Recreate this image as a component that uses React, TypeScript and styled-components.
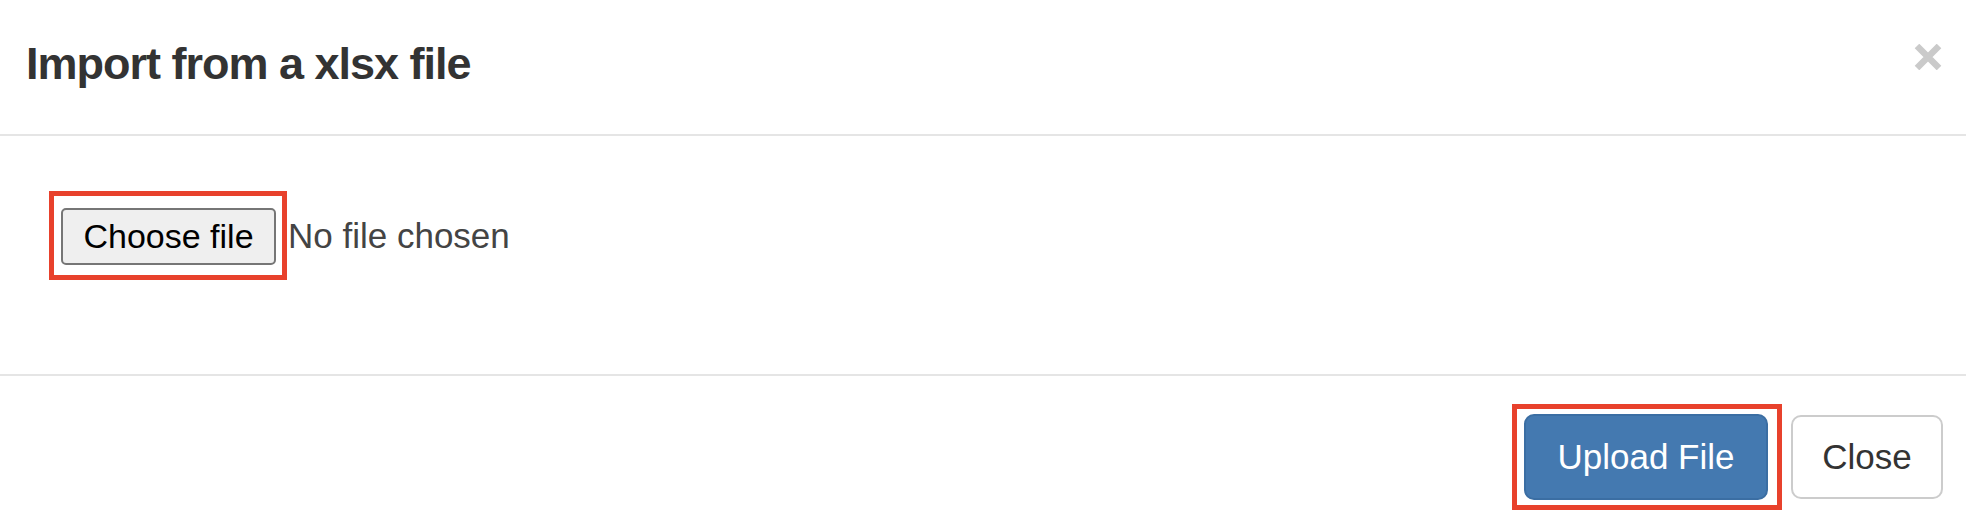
import React from "react";
import styled, { createGlobalStyle } from "styled-components";

const GlobalStyle = createGlobalStyle`
  html, body {
    margin: 0;
    padding: 0;
    background: #ffffff;
  }
  body {
    font-family: "Liberation Sans", Arial, Helvetica, sans-serif;
    color: #333333;
  }
  * { box-sizing: border-box; }
`;

const Modal = styled.div`
  width: 1966px;
  height: 518px;
  background: #ffffff;
  display: flex;
  flex-direction: column;
  overflow: hidden;
`;

const Header = styled.div`
  height: 136px;
  padding: 38px 24px 0 26px;
  border-bottom: 2px solid #e5e5e5;
  display: flex;
  justify-content: space-between;
  align-items: flex-start;
`;

const Title = styled.h4`
  margin: 0;
  font-family: "Liberation Sans", Arial, Helvetica, sans-serif;
  font-size: 45px;
  line-height: 52px;
  font-weight: 700;
  letter-spacing: -1px;
  color: #333333;
`;

const CloseX = styled.button`
  margin-top: 6px;
  padding: 0;
  border: 0;
  background: transparent;
  width: 28px;
  height: 26px;
  display: flex;
  cursor: pointer;
`;

const Body = styled.div`
  height: 238px;
  padding: 55px 0 0 49px;
`;

const FileRow = styled.div`
  display: flex;
  align-items: center;
`;

const Highlight = styled.div<{ $pad: string }>`
  border: 5px solid #e8412c;
  padding: ${(p) => p.$pad};
  display: flex;
  align-items: center;
`;

const ChooseButton = styled.button`
  width: 215px;
  height: 57px;
  border: 2px solid #767676;
  border-radius: 5px;
  background: #efefef;
  color: #000000;
  font-family: "Liberation Sans", Arial, Helvetica, sans-serif;
  font-size: 34px;
  padding: 0;
  display: flex;
  align-items: center;
  justify-content: center;
`;

const FileText = styled.span`
  margin-left: 1px;
  font-size: 35px;
  color: #444444;
  font-family: "Liberation Sans", Arial, Helvetica, sans-serif;
`;

const Footer = styled.div`
  flex: 1;
  border-top: 2px solid #e5e5e5;
  padding: 28px 23px 0 0;
  display: flex;
  justify-content: flex-end;
  align-items: flex-start;
`;

const FooterButtons = styled.div`
  display: flex;
  align-items: center;
`;

const Btn = styled.button<{ $primary?: boolean; $w: number; $h: number }>`
  width: ${(p) => p.$w}px;
  height: ${(p) => p.$h}px;
  border-radius: 10px;
  border: 2px solid ${(p) => (p.$primary ? "#3b6ea3" : "#cccccc")};
  background: ${(p) => (p.$primary ? "#4479b0" : "#ffffff")};
  color: ${(p) => (p.$primary ? "#ffffff" : "#333333")};
  font-family: "Liberation Sans", Arial, Helvetica, sans-serif;
  font-size: 35px;
  padding: 0;
  display: flex;
  align-items: center;
  justify-content: center;
  cursor: pointer;
`;

const CloseWrap = styled.div`
  margin-left: 9px;
`;

export default function App() {
  return (
    <>
      <GlobalStyle />
      <Modal>
        <Header>
          <Title>Import from a xlsx file</Title>
          <CloseX aria-label="Close">
            <svg width="28" height="26" viewBox="0 0 28 26">
              <path
                d="M3 2 L25 24 M25 2 L3 24"
                stroke="#cacaca"
                strokeWidth="6.5"
                fill="none"
              />
            </svg>
          </CloseX>
        </Header>
        <Body>
          <FileRow>
            <Highlight $pad="12px 6px 10px 7px">
              <ChooseButton>Choose file</ChooseButton>
            </Highlight>
            <FileText>No file chosen</FileText>
          </FileRow>
        </Body>
        <Footer>
          <FooterButtons>
            <Highlight $pad="5px 9px 5px 7px">
              <Btn $primary $w={244} $h={86}>Upload File</Btn>
            </Highlight>
            <CloseWrap>
              <Btn $w={152} $h={84}>Close</Btn>
            </CloseWrap>
          </FooterButtons>
        </Footer>
      </Modal>
    </>
  );
}
